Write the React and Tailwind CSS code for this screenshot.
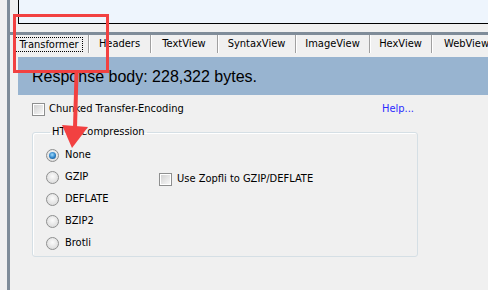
import React from 'react';

const tabs = [
  { label: 'Transformer', w: 'w-[79px]', active: true },
  { label: 'Headers', w: 'w-[62px]' },
  { label: 'TextView', w: 'w-[67px]' },
  { label: 'SyntaxView', w: 'w-[78px]' },
  { label: 'ImageView', w: 'w-[74px]' },
  { label: 'HexView', w: 'w-[62px]' },
  { label: 'WebView', w: 'w-[70px]' },
];

function Radio({ checked }) {
  return (
    <span className="w-[13px] h-[13px] rounded-full border border-[#8e8f8f] bg-[radial-gradient(circle_at_50%_40%,#fbfbfb,#d4d4d4)] flex items-center justify-center shrink-0">
      {checked && (
        <span className="w-[7px] h-[7px] rounded-full bg-[radial-gradient(circle_at_45%_40%,#9fdcff,#2a7fc4_55%,#0f3f72)]" />
      )}
    </span>
  );
}

function Checkbox() {
  return (
    <span className="w-[13px] h-[13px] border border-[#8e8f8f] bg-white flex items-center justify-center shrink-0">
      <span className="w-[9px] h-[9px] bg-gradient-to-br from-[#d2d2d2] to-[#f7f7f7]" />
    </span>
  );
}

export default function App() {
  return (
    <div className="w-[488px] h-[290px] bg-[#f0f0f0] flex relative overflow-hidden font-['DejaVu_Sans_Condensed','Liberation_Sans',Arial,sans-serif] text-black">
      <div className="w-[7px] shrink-0" />
      <div className="w-[3px] shrink-0 bg-[#7f8c99]" />

      <div className="flex-1 flex flex-col min-w-0">
        <div className="ml-[8px] h-[24px] bg-[#eef5fd] border-l border-b border-black" />
        <div className="h-[8px]" />
        <div className="h-[3px] bg-[#7f8c99]" />

        <div className="h-[18px] flex text-[11px]">
          {tabs.map((t) => (
            <div
              key={t.label}
              className={`${t.w} shrink-0 flex items-center justify-center border-r border-[#a0a0a0] shadow-[1px_0_0_#fff] whitespace-nowrap`}
            >
              {t.active ? (
                <span className="border border-dotted border-black px-[3px] leading-[13px]">{t.label}</span>
              ) : (
                <span>{t.label}</span>
              )}
            </div>
          ))}
        </div>

        <div className="h-[4px]" />

        <div className="ml-[8px] h-[38px] bg-[#98b4d0] pl-[14px] pt-[2px] flex items-center text-[16px] font-['Liberation_Sans',Arial,sans-serif]">
          Response body: 228,322 bytes.
        </div>

        <div className="pl-[22px] pr-[74px] text-[11px]">
          <div className="h-[28px] flex items-center justify-between">
            <div className="flex items-center gap-[4px]">
              <Checkbox />
              <span>Chunked Transfer-Encoding</span>
            </div>
            <span className="text-[#2b2bff]">Help...</span>
          </div>

          <fieldset className="mt-[1px] w-[386px] h-[133px] border border-[#d5dfe5] rounded-[3px] shadow-[inset_1px_1px_0_#fff] pl-[13px]">
            <legend className="ml-[4px] px-[2px]">HTTP Compression</legend>
            <div className="flex flex-col pt-[4px]">
              <div className="h-[22px] flex items-center gap-[6px]">
                <Radio checked />
                <span>None</span>
              </div>
              <div className="h-[22px] flex items-center gap-[6px]">
                <Radio />
                <span className="w-[88px]">GZIP</span>
                <div className="flex items-center gap-[5px] mt-[3px]">
                  <Checkbox />
                  <span>Use Zopfli to GZIP/DEFLATE</span>
                </div>
              </div>
              <div className="h-[22px] flex items-center gap-[6px]">
                <Radio />
                <span>DEFLATE</span>
              </div>
              <div className="h-[22px] flex items-center gap-[6px]">
                <Radio />
                <span>BZIP2</span>
              </div>
              <div className="h-[22px] flex items-center gap-[6px]">
                <Radio />
                <span>Brotli</span>
              </div>
            </div>
          </fieldset>
        </div>
      </div>

      <svg className="absolute inset-0 pointer-events-none" width="488" height="290" viewBox="0 0 488 290">
        <rect x="14.5" y="15.5" width="93" height="56" fill="none" stroke="#f24141" strokeWidth="3" />
        <line x1="76.5" y1="73" x2="75" y2="128" stroke="#f24141" strokeWidth="4" />
        <polygon points="62,125 88,127 72,148" fill="#f24141" />
      </svg>
    </div>
  );
}
